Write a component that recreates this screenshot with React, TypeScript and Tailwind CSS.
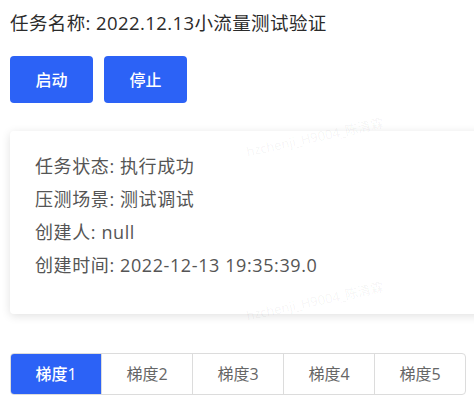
import React from "react";

const font = { fontFamily: '"Open Sans", "Noto Sans CJK SC", sans-serif' };

const info = [
  ["任务状态", "执行成功"],
  ["压测场景", "测试调试"],
  ["创建人", "null"],
  ["创建时间", "2022-12-13 19:35:39.0"],
];

const steps = ["梯度1", "梯度2", "梯度3", "梯度4", "梯度5"];

export default function App() {
  return (
    <div className="relative w-[474px] h-[408px] overflow-hidden bg-white" style={font}>
      <div className="pl-[10px] pt-[9px]">
        <h1 className="text-[18.5px] leading-[28px] text-[#2b2b2b] tracking-[0.4px]">
          任务名称: 2022.12.13小流量测试验证
        </h1>

        <div className="mt-[19px] flex gap-[11px]">
          <button className="w-[83px] h-[47px] rounded-[4px] bg-[#2c62f6] text-white text-[16px] font-medium">
            启动
          </button>
          <button className="w-[83px] h-[47px] rounded-[4px] bg-[#2c62f6] text-white text-[16px] font-medium">
            停止
          </button>
        </div>

        <div className="mt-[28px] w-[480px] h-[183px] rounded-l-[4px] bg-white shadow-[0_2px_10px_rgba(0,0,0,0.12)] pl-[25px] pt-[19px]">
          {info.map(([k, v]) => (
            <div key={k} className="text-[18px] leading-[33px] text-[#555] tracking-[0.6px]">
              {k}: {v}
            </div>
          ))}
        </div>

        <div className="mt-[39px] flex w-[456px] h-[42px] rounded-[4px] border border-[#dcdcdc] overflow-hidden">
          {steps.map((s, i) => (
            <div
              key={s}
              className={
                i === 0
                  ? "flex-1 flex items-center justify-center bg-[#2c62f6] text-white text-[16px] font-medium"
                  : "flex-1 flex items-center justify-center border-l border-[#dcdcdc] text-[#666] text-[16px]"
              }
            >
              {s}
            </div>
          ))}
        </div>
      </div>

      <div className="pointer-events-none absolute left-[245px] top-[128px] -rotate-[12deg] text-[13px] text-black/[0.05]">
        hzchenji_H9004_陈清霖
      </div>
      <div className="pointer-events-none absolute left-[245px] top-[292px] -rotate-[12deg] text-[13px] text-black/[0.05]">
        hzchenji_H9004_陈清霖
      </div>
    </div>
  );
}
